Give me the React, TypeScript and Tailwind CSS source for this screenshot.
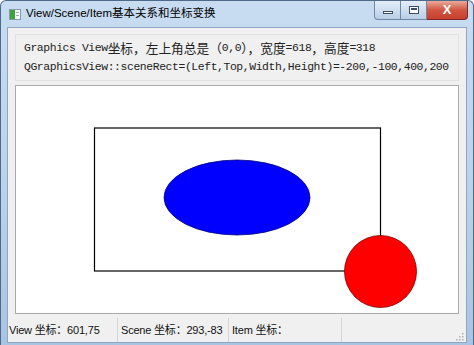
import React from "react";

// split a line into ascii runs (narrow mono) and cjk runs
function Mixed({ text }: { text: string }) {
  const parts = text.split(/([\x20-\x7e]+)/).filter((p) => p !== "");
  return (
    <>
      {parts.map((p, i) =>
        /^[\x20-\x7e]+$/.test(p) ? (
          <span key={i} className="font-['Liberation_Mono',monospace] text-[11.4px] tracking-[-0.4px] whitespace-pre">
            {p}
          </span>
        ) : (
          <span key={i}>{p}</span>
        )
      )}
    </>
  );
}

function TitleButtons() {
  return (
    <div className="flex items-start self-start">
      <div className="flex h-[19px] w-[27px] items-center justify-center rounded-bl-[4px] border border-t-0 border-[#6d88a8] bg-gradient-to-b from-[#e4eef9] to-[#b9cde4]">
        <div className="mt-[5px] h-[3px] w-[10px] border border-[#3b4e66] bg-white" />
      </div>
      <div className="flex h-[19px] w-[26px] items-center justify-center border border-l-0 border-t-0 border-[#6d88a8] bg-gradient-to-b from-[#e4eef9] to-[#b9cde4]">
        <div className="h-[8px] w-[10px] border border-[#3b4e66] bg-white p-[1px]">
          <div className="h-full w-full border-t-2 border-[#3b4e66]" />
        </div>
      </div>
      <div className="flex h-[19px] w-[41px] items-center justify-center rounded-br-[4px] border border-l-0 border-t-0 border-[#7a2a2a] bg-gradient-to-b from-[#e9a99c] via-[#d25441] to-[#c6402d] font-['Liberation_Sans',sans-serif] text-[13px] font-bold text-white">
        X
      </div>
    </div>
  );
}

export default function App() {
  return (
    <div className="flex h-[345px] w-[474px] flex-col overflow-hidden rounded-t-[6px] border border-b-0 border-[#4d6a8b] bg-gradient-to-b from-[#c8dcf1] via-[#bcd3ec] to-[#a9c4e2] font-['Liberation_Sans','Noto_Sans_CJK_SC',sans-serif]">
      {/* title bar */}
      <div className="flex h-[26px] shrink-0 items-center pl-[8px] pr-[5px]">
        <div className="flex h-[11px] w-[12px] border border-[#8a9aa8] bg-white">
          <div className="h-full w-[5px] bg-[#3fa33f]" />
          <div className="flex flex-1 flex-col justify-center gap-[2px] px-[1px]">
            <div className="h-px bg-[#9aa]" />
            <div className="h-px bg-[#9aa]" />
          </div>
        </div>
        <div className="ml-[5px] flex-1 text-[11.5px] leading-none text-black">View/Scene/Item基本关系和坐标变换</div>
        <TitleButtons />
      </div>

      {/* client area */}
      <div className="mx-[6px] flex flex-1 flex-col border border-[#8ea6c2] bg-[#f0f0f0]">
        <div className="mx-[7px] mt-[6px] flex flex-col border border-[#e2e2e2] px-[8px] pb-[3px] pt-[4px] font-['Noto_Sans_CJK_SC',sans-serif] text-[12.7px] text-[#222]">
          <div className="flex h-[19px] items-center whitespace-nowrap leading-none">
            <Mixed text="Graphics View坐标，左上角总是（0,0），宽度=618，高度=318" />
          </div>
          <div className="flex h-[19px] items-center whitespace-nowrap leading-none">
            <Mixed text="QGraphicsView::sceneRect=(Left,Top,Width,Height)=-200,-100,400,200" />
          </div>
        </div>

        {/* graphics view */}
        <div className="mx-[7px] mt-[4px] h-[229px] border border-[#a9a9a9] bg-white">
          <svg width="441" height="227" viewBox="0 0 441 227">
            <rect x="78.5" y="42" width="286" height="143" fill="none" stroke="#000" strokeWidth="1.2" />
            <ellipse cx="221" cy="111.5" rx="73" ry="37.5" fill="#0000ff" stroke="#00007a" strokeWidth="0.8" />
            <circle cx="364.5" cy="185.5" r="36" fill="#ff0000" stroke="#7a0000" strokeWidth="0.8" />
          </svg>
        </div>

        {/* status bar */}
        <div className="mt-auto flex h-[28px] items-center whitespace-nowrap pt-[4px] text-[11px] tracking-[-0.2px] text-[#111]">
          <div className="flex h-full w-[110px] items-center border-r border-[#d4d4d4] pl-[1px]">View 坐标：601,75</div>
          <div className="flex h-full w-[111px] items-center border-r border-[#d4d4d4] pl-[3px]">Scene 坐标：293,-83</div>
          <div className="flex h-full w-[113px] items-center border-r border-[#d4d4d4] pl-[3px]">Item 坐标：</div>
          <div className="flex h-full flex-1 items-end justify-end pb-[1px] pr-[2px]">
            <svg width="9" height="9" viewBox="0 0 9 9">
              {[[7, 1], [4, 4], [7, 4], [1, 7], [4, 7], [7, 7]].map(([x, y], i) => (
                <rect key={i} x={x} y={y} width="1.5" height="1.5" fill="#b0b0b0" />
              ))}
            </svg>
          </div>
        </div>
      </div>
      <div className="h-[2px] shrink-0" />
    </div>
  );
}
